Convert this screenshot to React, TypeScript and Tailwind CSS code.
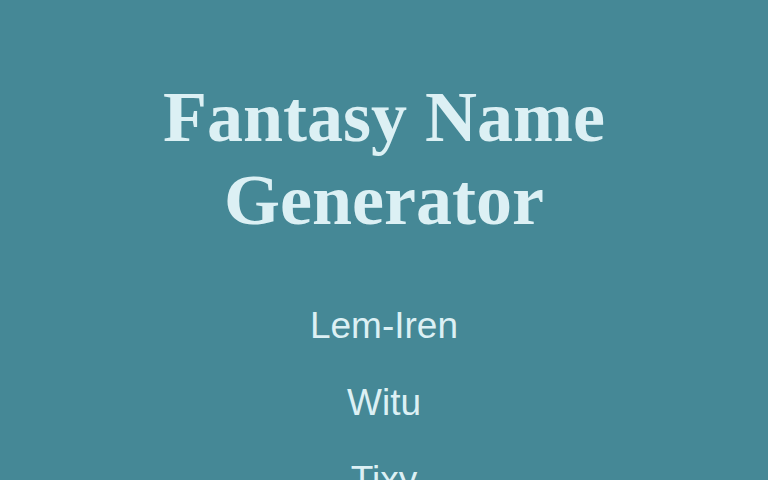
export default function App() {
  const names = ["Lem-Iren", "Witu", "Tixy"];
  return (
    <div className="h-[480px] w-[768px] overflow-hidden bg-[#458896] text-[#dcf0f4]">
      <div className="flex flex-col items-center pt-[76px]">
        <h1 className="text-center text-[72px] font-bold leading-[83px] font-['Liberation_Serif',serif]">
          Fantasy Name
          <br />
          Generator
        </h1>
        <div className="mt-[64px] flex flex-col items-center gap-[37px]">
          {names.map((n) => (
            <div key={n} className="text-[37px] leading-[40px] font-['Liberation_Sans',sans-serif]">
              {n}
            </div>
          ))}
        </div>
      </div>
    </div>
  );
}
